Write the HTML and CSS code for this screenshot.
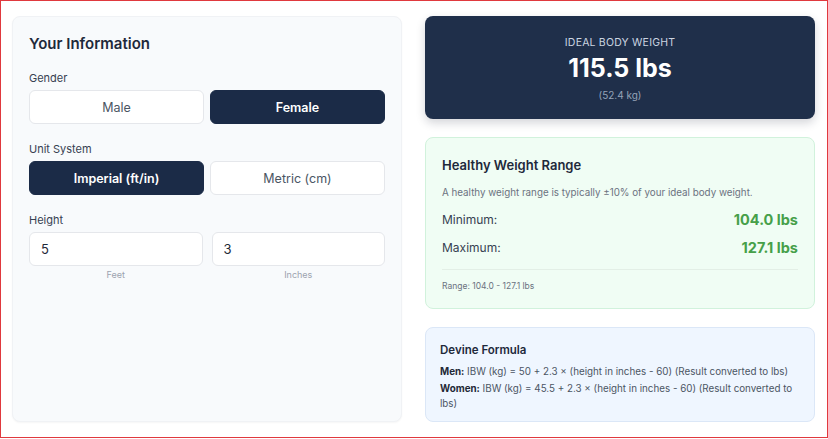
FILE: index.html
```html
<!DOCTYPE html>
<html lang="en">
<head>
<meta charset="utf-8"/>
<meta content="width=device-width, initial-scale=1.0" name="viewport"/>
<title>Ideal Body Weight Calculator</title>
<link rel="stylesheet" href="styles.css">
</head>
<body>
<div class="frame">
  <div class="calc">
    <div class="card inputs">
      <h2>Your Information</h2>
      <div class="field">
        <label>Gender</label>
        <div class="toggle">
          <button>Male</button>
          <button class="active">Female</button>
        </div>
      </div>
      <div class="field">
        <label>Unit System</label>
        <div class="toggle">
          <button class="active">Imperial (ft/in)</button>
          <button>Metric (cm)</button>
        </div>
      </div>
      <div class="field">
        <label>Height</label>
        <div class="height-row">
          <div class="height-box">
            <input type="text" value="5"/>
            <span>Feet</span>
          </div>
          <div class="height-box">
            <input type="text" value="3"/>
            <span>Inches</span>
          </div>
        </div>
      </div>
    </div>

    <div class="results">
      <div class="card ibw">
        <div class="ibw-label">IDEAL BODY WEIGHT</div>
        <div class="ibw-value">115.5 lbs</div>
        <div class="ibw-kg">(52.4 kg)</div>
      </div>
      <div class="card range">
        <h3>Healthy Weight Range</h3>
        <p class="range-desc">A healthy weight range is typically ±10% of your ideal body weight.</p>
        <div class="range-row">
          <span>Minimum:</span>
          <strong>104.0 lbs</strong>
        </div>
        <div class="range-row">
          <span>Maximum:</span>
          <strong>127.1 lbs</strong>
        </div>
        <div class="range-note">Range: 104.0 - 127.1 lbs</div>
      </div>
      <div class="card formula">
        <h3>Devine Formula</h3>
        <p><b>Men:</b> IBW (kg) = 50 + 2.3 × (height in inches - 60) (Result converted to lbs)</p>
        <p><b>Women:</b> IBW (kg) = 45.5 + 2.3 × (height in inches - 60) (Result converted to lbs)</p>
      </div>
    </div>
  </div>
</div>
</body>
</html>
```

FILE: styles.css
```css
  * {
    box-sizing: border-box;
  }
  body {
    margin: 0;
    font-family: Inter, "Noto Sans", sans-serif;
    color: #1e293b;
    background: #ffffff;
  }
  .frame {
    width: 828px;
    height: 438px;
    border: 1px solid #e0393e;
    padding: 15px 12px 0 11px;
  }
  .calc {
    display: grid;
    grid-template-columns: 390px 390px;
    column-gap: 23px;
    height: 406px;
  }
  .card {
    border-radius: 8px;
  }
  .inputs {
    background: #f8fafc;
    border: 1px solid #f0f2f5;
    box-shadow: 0 1px 2px rgba(0,0,0,0.04);
    padding: 17px 16px;
  }
  .inputs h2 {
    margin: 0 0 17px;
    font-size: 15px;
    font-weight: 600;
    line-height: 20px;
  }
  .field {
    margin-bottom: 18px;
  }
  .field label {
    display: block;
    font-size: 11px;
    color: #374151;
    line-height: 14px;
    margin-bottom: 5px;
  }
  .toggle {
    display: flex;
    gap: 6px;
  }
  .toggle button {
    flex: 1;
    height: 34px;
    font-family: inherit;
    font-size: 12.5px;
    color: #4b5563;
    background: #ffffff;
    border: 1px solid #e5e7eb;
    border-radius: 6px;
  }
  .toggle button.active {
    background: #1b2b47;
    border-color: #1b2b47;
    color: #ffffff;
    font-weight: 600;
  }
  .height-row {
    display: flex;
    gap: 9px;
  }
  .height-box {
    flex: 1;
    display: flex;
    flex-direction: column;
    align-items: center;
  }
  .height-box input {
    width: 100%;
    height: 34px;
    padding: 0 11px;
    font-family: inherit;
    font-size: 13px;
    color: #1f2937;
    background: #ffffff;
    border: 1px solid #e5e7eb;
    border-radius: 6px;
  }
  .height-box span {
    margin-top: 3px;
    font-size: 9px;
    color: #9ca3af;
  }
  .results {
    display: flex;
    flex-direction: column;
    gap: 18px;
  }
  .ibw {
    height: 103px;
    background: #1f2f4a;
    box-shadow: 0 4px 10px rgba(15,23,42,0.18);
    text-align: center;
    padding-top: 20px;
  }
  .ibw-label {
    font-size: 10.5px;
    color: #cbd5e1;
    letter-spacing: 0.2px;
  }
  .ibw-value {
    margin-top: 4px;
    font-size: 25px;
    font-weight: 700;
    color: #ffffff;
    line-height: 30px;
  }
  .ibw-kg {
    margin-top: 6px;
    font-size: 10px;
    color: #94a3b8;
  }
  .range {
    height: 172px;
    background: #f0fdf4;
    border: 1px solid #d1f2dc;
    padding: 19px 16px 0;
  }
  .range h3, .formula h3 {
    margin: 0;
    font-size: 13px;
    font-weight: 600;
    color: #1e293b;
  }
  .range-desc {
    margin: 14px 0 7px;
    font-size: 9.8px;
    color: #6b7280;
  }
  .range-row {
    display: flex;
    justify-content: space-between;
    align-items: center;
    height: 28px;
    font-size: 12px;
    color: #374151;
  }
  .range-row strong {
    font-size: 14.5px;
    color: #46a049;
    font-weight: 700;
  }
  .range-note {
    margin-top: 8px;
    border-top: 1px solid #e3efe6;
    padding-top: 11px;
    font-size: 8.5px;
    color: #6b7280;
  }
  .formula {
    flex: 1;
    background: #eff6ff;
    border: 1px solid #dbe7f7;
    padding: 15px 14px 0;
  }
  .formula h3 {
    font-size: 11.5px;
    margin-bottom: 7px;
  }
  .formula p {
    margin: 0 0 2px;
    font-size: 9.8px;
    line-height: 15px;
    color: #4b5563;
  }
  .formula b {
    color: #1f2937;
  }
```
